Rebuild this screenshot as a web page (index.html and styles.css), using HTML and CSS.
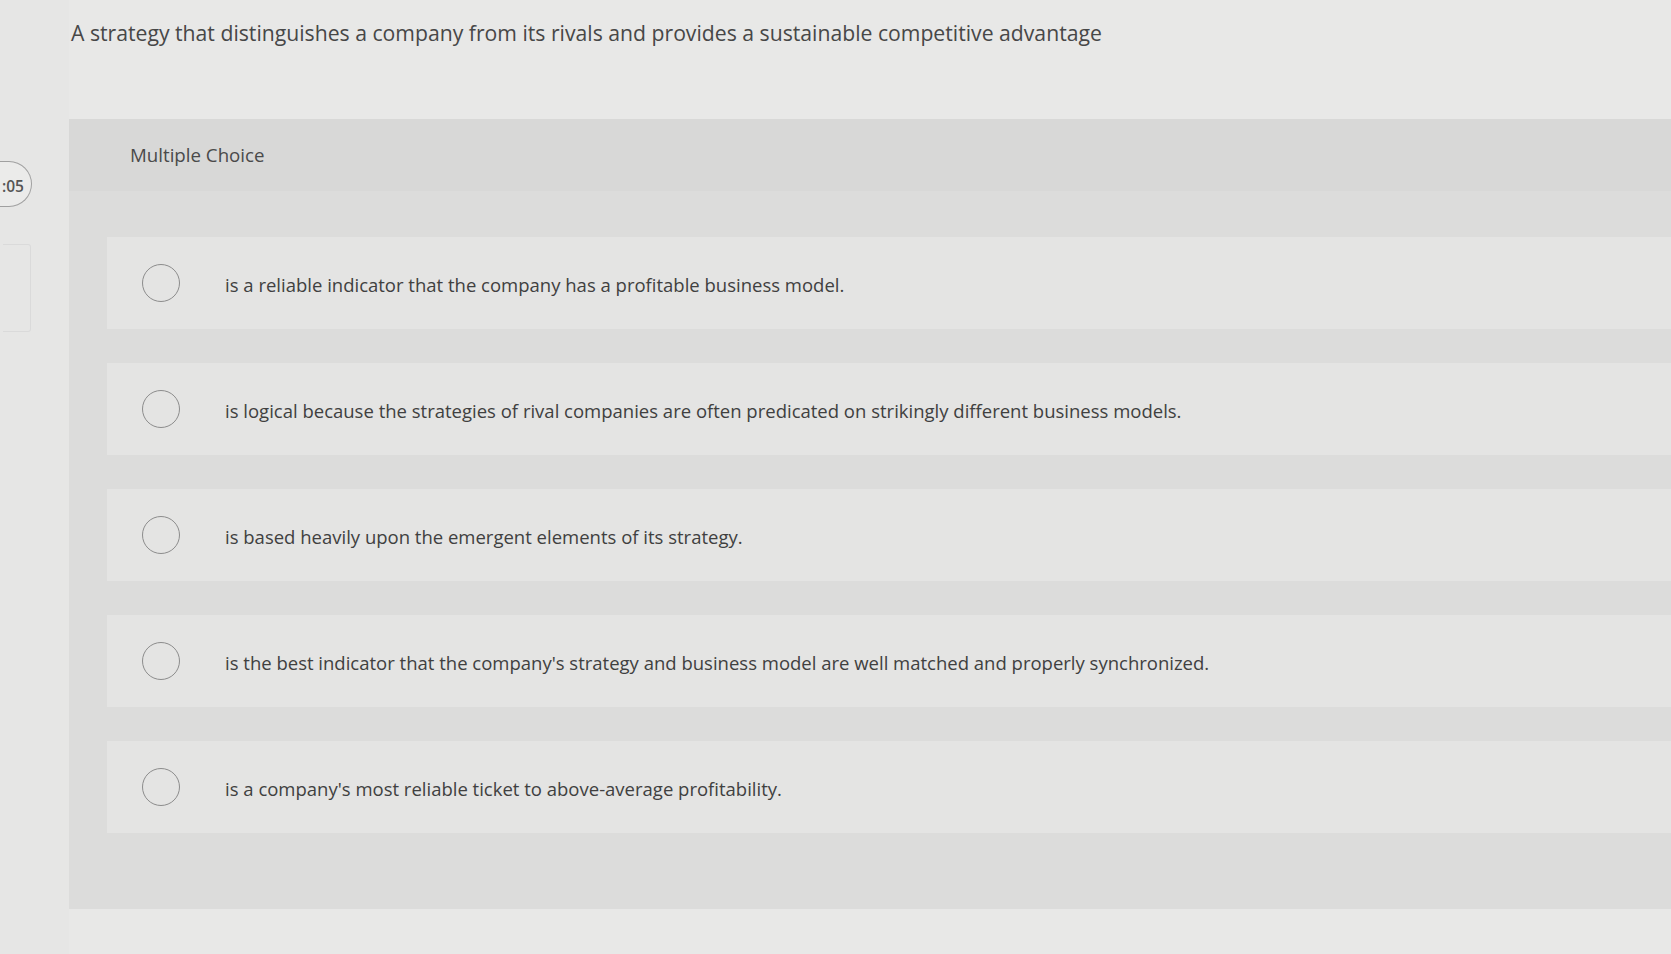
FILE: index.html
```html
<!DOCTYPE html>
<html lang="en">
<head>
<meta charset="utf-8">
<title>Multiple Choice</title>
<link rel="stylesheet" href="styles.css">
</head>
<body>
<div class="page">
  <aside class="rail">
    <div class="timer">:05</div>
    <div class="rail-card"></div>
  </aside>
  <main class="main">
    <h1 class="question">A strategy that distinguishes a company from its rivals and provides a sustainable competitive advantage</h1>
    <section class="panel">
      <div class="panel-head">Multiple Choice</div>
      <div class="options">
        <label class="option"><span class="radio"></span><span class="opt-text">is a reliable indicator that the company has a profitable business model.</span></label>
        <label class="option"><span class="radio"></span><span class="opt-text">is logical because the strategies of rival companies are often predicated on strikingly different business models.</span></label>
        <label class="option"><span class="radio"></span><span class="opt-text">is based heavily upon the emergent elements of its strategy.</span></label>
        <label class="option"><span class="radio"></span><span class="opt-text">is the best indicator that the company's strategy and business model are well matched and properly synchronized.</span></label>
        <label class="option"><span class="radio"></span><span class="opt-text">is a company's most reliable ticket to above-average profitability.</span></label>
      </div>
    </section>
  </main>
</div>
</body>
</html>
```
FILE: styles.css
```css
html, body {
  margin: 0;
  padding: 0;
}
body {
  background: #e8e8e7;
  font-family: "Open Sans", "Lato", "Liberation Sans", sans-serif;
  color: #454545;
  overflow: hidden;
  width: 1671px;
  height: 954px;
}
.page {
  display: flex;
  height: 954px;
}
.rail {
  width: 69px;
  flex: none;
  background: #e6e6e5;
  display: flex;
  flex-direction: column;
  align-items: flex-start;
}
.timer {
  margin-top: 161px;
  width: 32px;
  height: 46px;
  box-sizing: border-box;
  border: 1.5px solid #a0a0a0;
  border-left: none;
  border-radius: 0 23px 23px 0;
  display: flex;
  align-items: center;
  justify-content: flex-end;
  padding-right: 7px;
  padding-top: 3px;
  font-size: 15.5px;
  font-weight: 600;
  color: #555;
  background: #ebebea;
}
.rail-card {
  margin-top: 37px;
  margin-left: 3px;
  width: 27px;
  height: 86px;
  border: 1px solid #dadada;
  border-left: none;
  border-radius: 0 3px 3px 0;
}
.main {
  flex: 1;
  min-width: 0;
}
.question {
  margin: 0;
  padding: 21px 0 0 2px;
  font-size: 21.2px;
  line-height: 24px;
  font-weight: 400;
  color: #474747;
  white-space: nowrap;
}
.panel {
  margin-top: 74px;
  background: #dcdcdb;
  padding-bottom: 76px;
}
.panel-head {
  height: 72px;
  box-sizing: border-box;
  background: #d8d8d7;
  padding: 25px 0 0 61px;
  font-size: 18.7px;
  line-height: 22px;
  color: #4a4a4a;
}
.options {
  padding: 46px 0 0 38px;
  display: flex;
  flex-direction: column;
  gap: 34px;
}
.option {
  height: 92px;
  background: #e4e4e3;
  display: flex;
  align-items: center;
  padding-left: 35px;
  cursor: pointer;
}
.radio {
  width: 38px;
  height: 38px;
  box-sizing: border-box;
  border: 1.5px solid #8c8c8c;
  border-radius: 50%;
  flex: none;
}
.opt-text {
  margin-left: 45px;
  padding-top: 3px;
  font-size: 18.5px;
  color: #404040;
  white-space: nowrap;
}
```
